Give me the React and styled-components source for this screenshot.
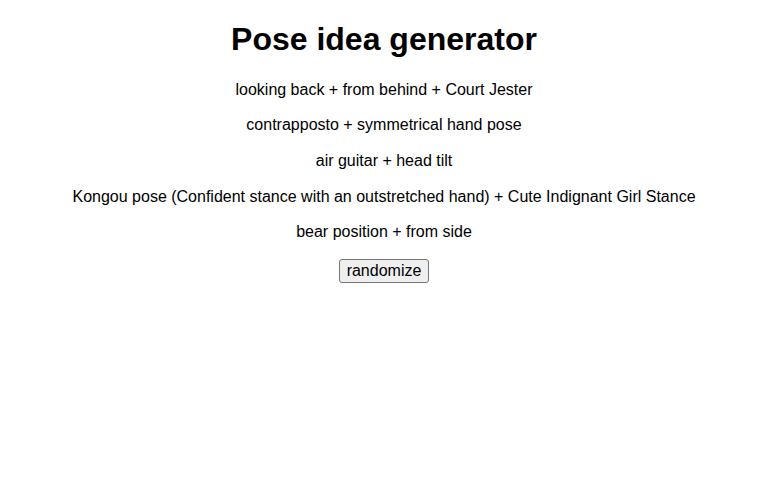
import React, { useState } from "react"
import styled, { createGlobalStyle } from "styled-components"

const GlobalStyle = createGlobalStyle`
  body {
    margin: 0;
    background: #fff;
    color: #000;
    font-family: "Liberation Sans", Arial, sans-serif;
  }
`

const poses = [
  "looking back",
  "from behind",
  "Court Jester",
  "contrapposto",
  "symmetrical hand pose",
  "air guitar",
  "head tilt",
  "Kongou pose (Confident stance with an outstretched hand)",
  "Cute Indignant Girl Stance",
  "bear position",
  "from side",
  "hands on hips",
  "peace sign",
  "sitting cross-legged",
  "over the shoulder",
]

const initial = [
  ["looking back", "from behind", "Court Jester"],
  ["contrapposto", "symmetrical hand pose"],
  ["air guitar", "head tilt"],
  ["Kongou pose (Confident stance with an outstretched hand)", "Cute Indignant Girl Stance"],
  ["bear position", "from side"],
]

const pick = () => {
  const n = 2 + Math.floor(Math.random() * 2)
  const out = []
  while (out.length < n) {
    const p = poses[Math.floor(Math.random() * poses.length)]
    if (!out.includes(p)) out.push(p)
  }
  return out
}

const Page = styled.div`
  text-align: center;
  padding: 0 8px;
`

const Title = styled.h1`
  font-size: 32px;
  font-weight: bold;
  margin: 21.44px 0 22.4px;
`

const Idea = styled.p`
  font-size: 16px;
  margin: 17.6px 0;
`

const Controls = styled.div`
  margin-top: 17px;
`

const Button = styled.button`
  font-family: "Liberation Sans", Arial, sans-serif;
  font-size: 16px;
  line-height: 18px;
  padding: 2px 7px;
  color: #000;
  background: #efefef;
  border: 1px solid #767676;
  border-radius: 3px;
  cursor: pointer;
  &:hover {
    background: #e5e5e5;
  }
`

export default function App() {
  const [ideas, setIdeas] = useState(initial)

  return (
    <Page>
      <GlobalStyle />
      <Title>Pose idea generator</Title>
      {ideas.map((idea, i) => (
        <Idea key={i}>{idea.join(" + ")}</Idea>
      ))}
      <Controls>
        <Button onClick={() => setIdeas(initial.map(pick))}>randomize</Button>
      </Controls>
    </Page>
  )
}
